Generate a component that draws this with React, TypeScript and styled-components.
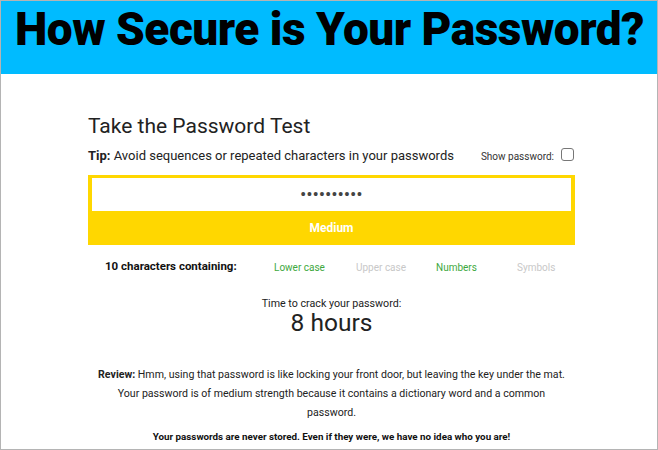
import styled, { createGlobalStyle } from 'styled-components';

const GlobalStyle = createGlobalStyle`
  html, body { margin: 0; padding: 0; background: #fff; }
  body { font-family: Roboto, "Liberation Sans", sans-serif; color: #222; }
`;

const Frame = styled.div`
  width: 658px;
  height: 450px;
  box-sizing: border-box;
  border: 1px solid #b4b4b4;
  overflow: hidden;
  display: flex;
  flex-direction: column;
`;

const Banner = styled.header`
  height: 73px;
  flex-shrink: 0;
  background: #00bbff;
  padding: 2px 0 0 14px;
  box-sizing: border-box;
  display: flex;
  align-items: flex-start;
`;

const BannerTitle = styled.h1`
  margin: 0;
  font-family: Roboto, "Liberation Sans", sans-serif;
  font-weight: 900;
  font-size: 46px;
  line-height: 52px;
  letter-spacing: -0.5px;
  color: #000;
  white-space: nowrap;
`;

const Main = styled.main`
  width: 487px;
  margin: 40px 0 0 87px;
  display: flex;
  flex-direction: column;
`;

const TestTitle = styled.h2`
  margin: 0;
  font-weight: 400;
  font-size: 21px;
  line-height: 24px;
  color: #222;
`;

const TipRow = styled.div`
  margin-top: 10px;
  height: 16px;
  display: flex;
  align-items: center;
  justify-content: space-between;
`;

const Tip = styled.p`
  margin: 0;
  font-size: 13px;
  line-height: 16px;
  color: #222;
  white-space: nowrap;
  b { font-weight: 700; }
`;

const ShowLabel = styled.label`
  display: flex;
  align-items: center;
  gap: 7px;
  font-size: 10px;
  color: #333;
  white-space: nowrap;
  margin-right: 1px;
`;

const CheckBox = styled.span`
  width: 11px;
  height: 11px;
  border: 1px solid #777;
  border-radius: 3px;
  background: #fff;
  margin-top: -4px;
`;

const Meter = styled.div`
  margin-top: 11px;
  background: #ffd700;
  padding: 3px 4px 0;
  display: flex;
  flex-direction: column;
`;

const PasswordField = styled.div`
  height: 33px;
  background: #fff;
  display: flex;
  align-items: center;
  justify-content: center;
  font-size: 16px;
  font-weight: 700;
  letter-spacing: 0.5px;
  color: #444;
`;

const Strength = styled.div`
  height: 34px;
  display: flex;
  align-items: center;
  justify-content: center;
  color: #fff;
  font-weight: 700;
  font-size: 12px;
`;

const CharRow = styled.div`
  margin-top: 14px;
  height: 14px;
  display: grid;
  grid-template-columns: 169px 82px 80px 81px auto;
  align-items: center;
  padding-left: 17px;
`;

const CharLabel = styled.span`
  font-weight: 700;
  font-size: 11.5px;
  color: #111;
`;

const CharClass = styled.span<{ $on: boolean }>`
  font-size: 10px;
  color: ${({ $on }) => ($on ? '#3ea83e' : '#c8c8c8')};
  margin-top: 2px;
`;

const Crack = styled.div`
  margin-top: 25px;
  display: flex;
  flex-direction: column;
  align-items: center;
`;

const CrackLabel = styled.span`
  font-size: 10.7px;
  line-height: 12px;
  color: #222;
`;

const CrackTime = styled.span`
  font-size: 24.5px;
  line-height: 25px;
  color: #222;
`;

const Review = styled.p`
  margin: 30px 0 0 -80px;
  width: 647px;
  text-align: center;
  font-size: 10.6px;
  line-height: 19px;
  color: #222;
  b { font-weight: 700; }
`;

const Note = styled.p`
  margin: 8px 0 0 -80px;
  width: 647px;
  text-align: center;
  font-size: 9.8px;
  line-height: 13px;
  font-weight: 700;
  color: #111;
`;

const classes = [
  { name: 'Lower case', on: true },
  { name: 'Upper case', on: false },
  { name: 'Numbers', on: true },
  { name: 'Symbols', on: false },
];

export default function App() {
  return (
    <>
      <GlobalStyle />
      <Frame>
        <Banner>
          <BannerTitle>How Secure is Your Password?</BannerTitle>
        </Banner>
        <Main>
          <TestTitle>Take the Password Test</TestTitle>
          <TipRow>
            <Tip>
              <b>Tip:</b> Avoid sequences or repeated characters in your passwords
            </Tip>
            <ShowLabel>
              Show password: <CheckBox />
            </ShowLabel>
          </TipRow>
          <Meter>
            <PasswordField>••••••••••</PasswordField>
            <Strength>Medium</Strength>
          </Meter>
          <CharRow>
            <CharLabel>10 characters containing:</CharLabel>
            {classes.map((c) => (
              <CharClass key={c.name} $on={c.on}>
                {c.name}
              </CharClass>
            ))}
          </CharRow>
          <Crack>
            <CrackLabel>Time to crack your password:</CrackLabel>
            <CrackTime>8 hours</CrackTime>
          </Crack>
          <Review>
            <b>Review:</b> Hmm, using that password is like locking your front door, but leaving the key under the mat.
            <br />
            Your password is of medium strength because it contains a dictionary word and a common
            <br />
            password.
          </Review>
          <Note>Your passwords are never stored. Even if they were, we have no idea who you are!</Note>
        </Main>
      </Frame>
    </>
  );
}
